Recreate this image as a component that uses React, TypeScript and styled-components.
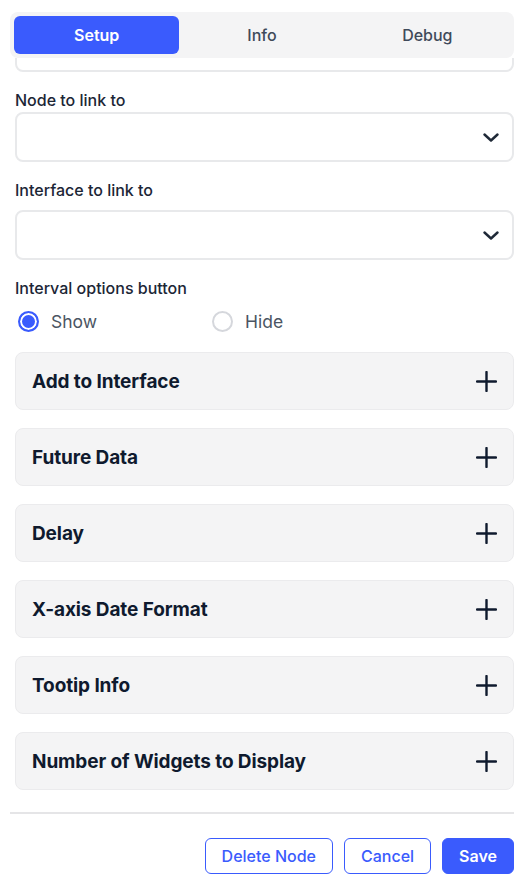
import React, { useLayoutEffect, useRef, useState } from 'react';
import styled, { createGlobalStyle } from 'styled-components';

const GlobalStyle = createGlobalStyle`
    html, body {
        margin: 0;
        padding: 0;
        background: #ffffff;
    }

    body {
        font-family: Inter, "Noto Sans", "Liberation Sans", sans-serif;
        color: #1e293b;
    }

    * {
        box-sizing: border-box;
    }
`;

const BLUE = '#3a5bfd';

const Panel = styled.div`
    height: 100vh;
    display: flex;
    flex-direction: column;
    padding: 12px 16px 8px 10px;
`;

const TabBar = styled.div`
    display: grid;
    grid-template-columns: repeat(3, 1fr);
    height: 46px;
    padding: 4px;
    border-radius: 8px;
    background: #f4f4f5;
    flex-shrink: 0;
`;

const Tab = styled.button<{ $active?: boolean }>`
    border: none;
    border-radius: 6px;
    font-family: inherit;
    font-size: 16px;
    font-weight: ${({ $active }) => ($active ? 600 : 500)};
    color: ${({ $active }) => ($active ? '#ffffff' : '#3f4a5a')};
    background: ${({ $active }) => ($active ? BLUE : 'transparent')};
    cursor: pointer;
`;

const ScrollArea = styled.div`
    flex: 1;
    overflow: hidden;
    padding: 0 0 22px 5px;
`;

const Form = styled.div`
    display: flex;
    flex-direction: column;
`;

const Section = styled.div`
    display: flex;
    flex-direction: column;
    margin-top: 18px;

    &:first-child {
        margin-top: 0;
    }
`;

const Label = styled.label<{ $gap: number }>`
    font-size: 16px;
    line-height: 20px;
    font-weight: 500;
    color: #1c2636;
    margin-bottom: ${({ $gap }) => $gap}px;
`;

const Input = styled.div`
    height: 50px;
    border: 2px solid #e8e9eb;
    border-radius: 8px;
    background: #fff;
`;

const Select = styled.div`
    height: 50px;
    border: 2px solid #e8e9eb;
    border-radius: 8px;
    background: #fff;
    display: flex;
    align-items: center;
    justify-content: flex-end;
    padding-right: 13px;
    color: #1f2937;
`;

const RadioGroup = styled.div`
    display: grid;
    grid-template-columns: 194px 194px;
    padding-left: 3px;
    margin-top: 12px;
`;

const RadioOption = styled.label`
    display: flex;
    align-items: center;
    gap: 12px;
    height: 22px;
    font-size: 17.5px;
    color: #4b5563;
    cursor: pointer;
`;

const RadioCircle = styled.span<{ $checked?: boolean }>`
    width: 21px;
    height: 21px;
    border-radius: 50%;
    border: 2px solid ${({ $checked }) => ($checked ? BLUE : '#d5d7dc')};
    background: ${({ $checked }) => ($checked ? BLUE : '#fff')};
    box-shadow: ${({ $checked }) => ($checked ? 'inset 0 0 0 2px #fff' : 'none')};
`;

const AccordionList = styled.div`
    display: flex;
    flex-direction: column;
    gap: 18px;
    margin-top: 20px;
`;

const AccordionItem = styled.div`
    height: 58px;
    display: flex;
    align-items: center;
    justify-content: space-between;
    padding: 0 16px 0 16px;
    border: 1px solid #ebebed;
    border-radius: 8px;
    background: #f4f4f5;
    cursor: pointer;
`;

const AccordionTitle = styled.span`
    font-size: 19px;
    font-weight: 700;
    color: #0f1a2e;
    letter-spacing: -0.1px;
`;

const Footer = styled.div`
    flex-shrink: 0;
    border-top: 2px solid #e5e5e7;
    padding-top: 24px;
    display: flex;
    justify-content: flex-end;
    gap: 11px;
`;

const Button = styled.button<{ $primary?: boolean }>`
    height: 36px;
    padding: 0 16px;
    border-radius: 6px;
    border: 1px solid ${BLUE};
    background: ${({ $primary }) => ($primary ? BLUE : '#fff')};
    color: ${({ $primary }) => ($primary ? '#fff' : BLUE)};
    font-family: inherit;
    font-size: 16px;
    font-weight: ${({ $primary }) => ($primary ? 600 : 500)};
    cursor: pointer;
`;

const Chevron = () => (
    <svg width="16" height="9" viewBox="0 0 16 9" fill="none">
        <path d="M1.5 1.5 L8 7.5 L14.5 1.5" stroke="currentColor" strokeWidth="2.4" strokeLinecap="round" strokeLinejoin="round" />
    </svg>
);

const PlusIcon = () => (
    <svg width="21" height="21" viewBox="0 0 21 21" fill="none">
        <path d="M10.5 1 V20 M1 10.5 H20" stroke="#0f1a2e" strokeWidth="2.4" strokeLinecap="round" />
    </svg>
);

const tabs = ['Setup', 'Info', 'Debug'];

const sections = [
    'Add to Interface',
    'Future Data',
    'Delay',
    'X-axis Date Format',
    'Tootip Info',
    'Number of Widgets to Display',
];

const App: React.FC = () => {
    const [activeTab, setActiveTab] = useState('Setup');
    const [showInterval, setShowInterval] = useState(true);
    const scrollRef = useRef<HTMLDivElement>(null);

    // the form is shown scrolled down to its end
    useLayoutEffect(() => {
        const el = scrollRef.current;
        if (el) el.scrollTop = el.scrollHeight;
    }, []);

    return (
        <>
            <GlobalStyle />
            <Panel>
                <TabBar>
                    {tabs.map((t) => (
                        <Tab key={t} $active={t === activeTab} onClick={() => setActiveTab(t)}>
                            {t}
                        </Tab>
                    ))}
                </TabBar>
                <ScrollArea ref={scrollRef}>
                    <Form>
                        <Section>
                            <Input />
                        </Section>
                        <Section>
                            <Label $gap={2}>Node to link to</Label>
                            <Select>
                                <Chevron />
                            </Select>
                        </Section>
                        <Section>
                            <Label $gap={10}>Interface to link to</Label>
                            <Select>
                                <Chevron />
                            </Select>
                        </Section>
                        <Section>
                            <Label $gap={0}>Interval options button</Label>
                            <RadioGroup>
                                <RadioOption onClick={() => setShowInterval(true)}>
                                    <RadioCircle $checked={showInterval} />
                                    Show
                                </RadioOption>
                                <RadioOption onClick={() => setShowInterval(false)}>
                                    <RadioCircle $checked={!showInterval} />
                                    Hide
                                </RadioOption>
                            </RadioGroup>
                        </Section>
                        <AccordionList>
                            {sections.map((s) => (
                                <AccordionItem key={s}>
                                    <AccordionTitle>{s}</AccordionTitle>
                                    <PlusIcon />
                                </AccordionItem>
                            ))}
                        </AccordionList>
                    </Form>
                </ScrollArea>
                <Footer>
                    <Button>Delete Node</Button>
                    <Button>Cancel</Button>
                    <Button $primary>Save</Button>
                </Footer>
            </Panel>
        </>
    );
};

export default App;
